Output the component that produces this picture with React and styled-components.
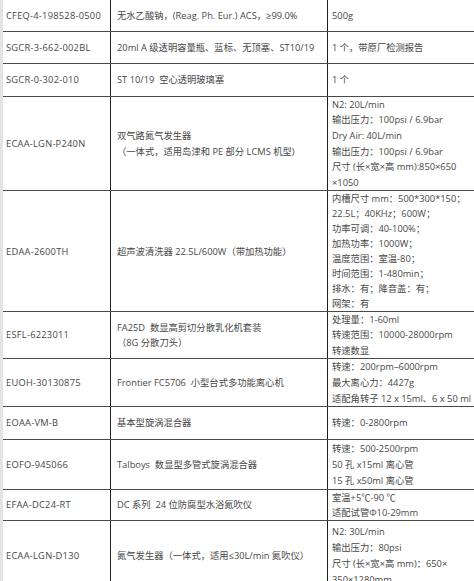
import styled, { createGlobalStyle } from "styled-components";

const GlobalStyle = createGlobalStyle`
  html, body {
    margin: 0;
    padding: 0;
    background: #ffffff;
    overflow: hidden;
  }
  body {
    font-family: "Open Sans", "Noto Sans CJK SC", sans-serif;
  }
`;

const Page = styled.div`
  width: 474px;
  height: 581px;
  overflow: hidden;
  border-left: 3px solid #e3e3e3;
  box-sizing: border-box;
`;

const Table = styled.div`
  width: 520px;
  display: flex;
  flex-direction: column;
`;

const Row = styled.div`
  display: grid;
  grid-template-columns: 108px 217px 1fr;
  height: ${(p) => p.$h}px;
  box-sizing: border-box;
  border-bottom: 1px solid #4a4a4a;
  line-height: ${(p) => p.$lh || 15.5}px;
`;

const Cell = styled.div`
  display: flex;
  flex-direction: column;
  justify-content: center;
  box-sizing: border-box;
  padding-left: ${(p) => p.$pad}px;
  border-right: ${(p) => (p.$last ? "none" : "1px solid #1f1f1f")};
  font-size: 9.3px;
  letter-spacing: ${(p) => p.$ls || 0}px;
  color: #474747;
  white-space: pre;
  overflow: hidden;
`;

const Line = styled.span`
  display: block;
`;

const rows = [
  { h: 32, code: "CFEQ-4-198528-0500", name: ["无水乙酸钠，(Reag. Ph. Eur.) ACS，≥99.0%"], spec: ["500g"] },
  { h: 32, code: "SGCR-3-662-002BL", name: ["20ml A 级透明容量瓶、蓝标、无顶塞、ST10/19"], spec: ["1 个，带原厂检测报告"] },
  { h: 33, code: "SGCR-0-302-010", name: ["ST 10/19  空心透明玻璃塞"], spec: ["1 个"] },
  {
    h: 94,
    lh: 15.6,
    code: "ECAA-LGN-P240N",
    name: ["双气路氮气发生器", "（一体式，适用岛津和 PE 部分 LCMS 机型)"],
    spec: ["N2: 20L/min", "输出压力：100psi / 6.9bar", "Dry Air: 40L/min", "输出压力：100psi / 6.9bar", "尺寸 (长×宽×高 mm):850×650", "×1050"],
  },
  {
    h: 121,
    lh: 15,
    code: "EDAA-2600TH",
    name: ["超声波清洗器 22.5L/600W（带加热功能）"],
    spec: [
      "内槽尺寸 mm：500*300*150；",
      "22.5L；40KHz；600W；",
      "功率可调：40-100%；",
      "加热功率：1000W；",
      "温度范围：室温-80；",
      "时间范围：1-480min；",
      "排水：有；降音盖：有；",
      "网架：有",
    ],
  },
  {
    h: 47,
    code: "ESFL-6223011",
    name: ["FA25D  数显高剪切分散乳化机套装", "（8G 分散刀头）"],
    spec: ["处理量：1-60ml", "转速范围：10000-28000rpm", "转速数显"],
  },
  {
    h: 48,
    lh: 16,
    code: "EUOH-30130875",
    name: ["Frontier FC5706  小型台式多功能离心机"],
    spec: ["转速：200rpm–6000rpm", "最大离心力：4427g", "适配角转子 12 x 15ml、6 x 50 ml"],
  },
  { h: 33, code: "EOAA-VM-B", name: ["基本型旋涡混合器"], spec: ["转速：0-2800rpm"] },
  {
    h: 50,
    lh: 16,
    code: "EOFO-945066",
    name: ["Talboys  数显型多管式旋涡混合器"],
    spec: ["转速：500-2500rpm", "50 孔 x15ml 离心管", "15 孔 x50ml 离心管"],
  },
  { h: 31, code: "EFAA-DC24-RT", name: ["DC 系列  24 位防腐型水浴氮吹仪"], spec: ["室温+5℃-90 ℃", "适配试管Φ10-29mm"] },
  {
    h: 70,
    lh: 16,
    code: "ECAA-LGN-D130",
    name: ["氮气发生器（一体式，适用≤30L/min 氮吹仪）"],
    spec: ["N2: 30L/min", "输出压力：80psi", "尺寸 (长×宽×高 mm)：650×", "350×1280mm"],
  },
];

export default function App() {
  return (
    <>
      <GlobalStyle />
      <Page>
        <Table>
          {rows.map((r) => (
            <Row key={r.code} $h={r.h} $lh={r.lh}>
              <Cell $pad={3} $ls={0.25}>
                {r.code}
              </Cell>
              <Cell $pad={6}>
                {r.name.map((t) => (
                  <Line key={t}>{t}</Line>
                ))}
              </Cell>
              <Cell $pad={4} $last>
                {r.spec.map((t, i) => (
                  <Line key={i}>{t}</Line>
                ))}
              </Cell>
            </Row>
          ))}
        </Table>
      </Page>
    </>
  );
}
